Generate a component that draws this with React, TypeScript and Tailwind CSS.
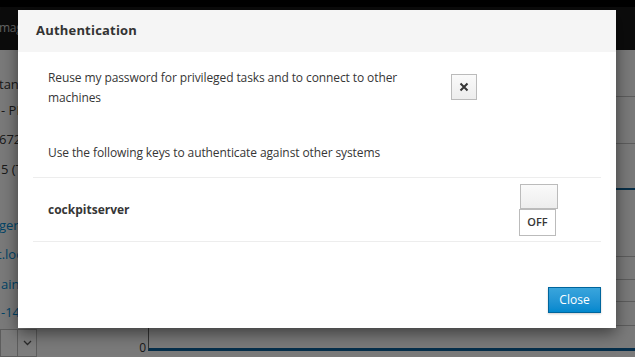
import React from "react";

export default function App() {
  const font = { fontFamily: '"Open Sans", "Noto Sans", sans-serif' };
  return (
    <div className="relative w-[635px] h-[357px] overflow-hidden bg-[#f5f5f5]" style={font}>
      {/* background page */}
      <div className="flex flex-col w-full h-full">
        <div className="h-[7px] bg-black" />
        <div className="h-[44px] bg-[#181818] flex items-center">
          <span className="ml-[-1px] text-[12px] tracking-[-0.3px] text-[#c8c8c8]">mage</span>
        </div>
        <div className="relative flex-1 flex">
          <div className="w-[130px] flex flex-col text-[13px] text-[#333] pt-[24px]">
            <div className="h-[26px] leading-[20px] -ml-[1px]">tance</div>
            <div className="h-[29px] leading-[20px] ml-[1px]">- PII</div>
            <div className="h-[30px] leading-[20px] -ml-[1px]">672</div>
            <div className="h-[56px] leading-[20px] ml-[1px]">5 (T</div>
            <div className="h-[29px] leading-[20px] text-[#0088ce] -ml-[1px]">ger</div>
            <div className="h-[30px] leading-[20px] text-[#0088ce] -ml-[3px]">t.loc</div>
            <div className="h-[28px] leading-[20px] text-[#0088ce] ml-[1px]">ain</div>
            <div className="h-[27px] leading-[20px] text-[#0088ce] ml-[1px]">-14</div>
            <div className="flex h-[28px] w-[37px] border border-[#bbb] bg-[#fafafa]">
              <div className="w-[17px] border-r border-[#bbb]" />
              <div className="flex-1 flex items-center justify-center text-[#555]">
                <svg width="9" height="6" viewBox="0 0 9 6"><path d="M1 1l3.5 3.5L8 1" fill="none" stroke="#555" strokeWidth="1.3" /></svg>
              </div>
            </div>
          </div>
          <div className="flex-1 flex flex-col">
            <div className="h-[47px] border-b border-[#bbb]" />
            <div className="h-[47px] border-b border-[#bbb]" />
            <div className="h-[46px] border-b-2 border-[#0f5c8f]" />
            <div className="h-[67px] border-b border-[#bbb]" />
            <div className="h-[23px] border-b border-[#bbb]" />
            <div className="h-[22px] border-b border-[#bbb]" />
            <div className="h-[24px] border-b border-[#bbb] flex items-end">
              <div className="w-[16px] text-right text-[11px] text-[#333] leading-[12px]">0.5</div>
            </div>
            <div className="flex h-[25px]">
              <div className="w-[16px] text-right text-[12px] text-[#333] leading-[14px] pt-[15px]">0</div>
              <div className="ml-[2px] flex-1 border-l border-[#666] border-b-[3px] border-b-[#0a5d94]" />
            </div>
            <div className="flex-1" />
          </div>
        </div>
      </div>

      {/* overlay */}
      <div className="absolute inset-0 bg-black/50" />

      {/* modal */}
      <div className="absolute left-[18px] top-[10px] w-[598px] h-[318px] bg-white shadow-[0_5px_15px_rgba(0,0,0,0.5)] flex flex-col text-[#363636]">
        <div className="h-[42px] bg-[#f5f5f5] px-[18px] flex items-center">
          <h4 className="text-[13px] font-bold text-[#333] tracking-[0.2px]">Authentication</h4>
        </div>
        <div className="flex-1 px-[15px] pt-[16px] flex flex-col">
          <div className="flex items-start px-[15px]">
            <p className="w-[395px] text-[12px] leading-[20px] tracking-[-0.1px]">
              Reuse my password for privileged tasks and to connect to other machines
            </p>
            <button className="mt-[6px] ml-[8px] w-[26px] h-[26px] border border-[#bbb] bg-gradient-to-b from-[#fafafa] to-[#ededed] flex items-center justify-center">
              <svg width="10" height="10" viewBox="0 0 10 10">
                <path d="M1.5 1.5l7 7M8.5 1.5l-7 7" stroke="#363636" strokeWidth="2" />
              </svg>
            </button>
          </div>
          <p className="px-[15px] mt-[35px] text-[12px] leading-[20px] tracking-[-0.1px]">
            Use the following keys to authenticate against other systems
          </p>
          <div className="mt-[14px] border-t border-[#ededed] flex px-[15px] pt-[6px] pb-[5px] border-b">
            <div className="flex-1 text-[12px] font-bold leading-[20px] pt-[16px]">cockpitserver</div>
            <div className="flex flex-col mr-[28px]">
              <div className="w-[38px] h-[25px] ml-[1px] border border-[#bbb] bg-gradient-to-b from-[#fafafa] to-[#ededed]" />
              <div className="w-[37px] h-[27px] border border-[#bbb] bg-white flex items-center justify-center text-[11px] font-semibold text-[#363636]">OFF</div>
            </div>
          </div>
          <div className="flex-1" />
          <div className="flex justify-end pb-[15px]">
            <button className="w-[53px] h-[26px] border border-[#00659c] bg-gradient-to-b from-[#39a5dc] to-[#0088ce] text-white text-[12px] shadow-[0_1px_2px_rgba(0,0,0,0.2)]">
              Close
            </button>
          </div>
        </div>
      </div>
    </div>
  );
}
